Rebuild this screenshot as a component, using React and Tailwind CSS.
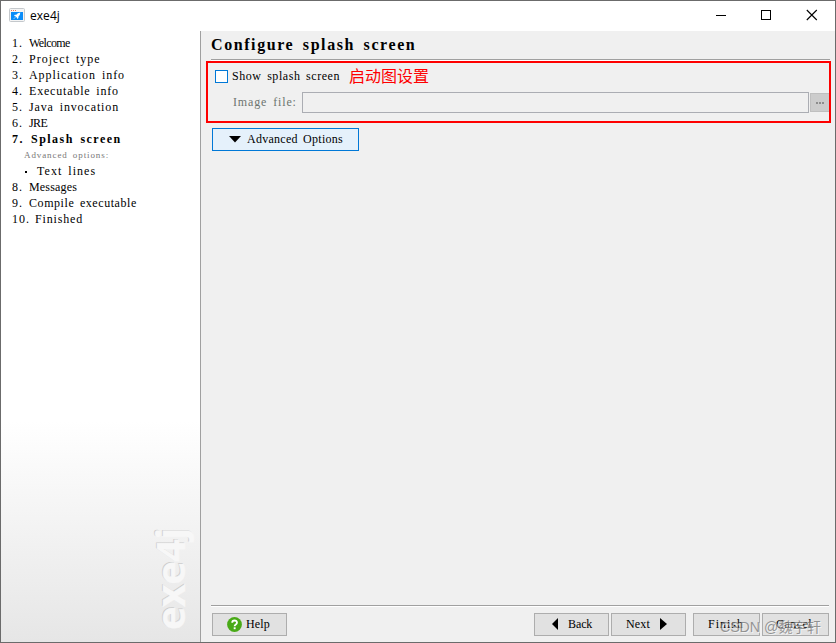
const SERIF = "font-['Liberation_Serif',serif]";

// Widely set 12px label text
function Label({ children, className = "" }) {
  return (
    <span className={`${SERIF} block shrink-0 whitespace-pre text-[12px] leading-4 [word-spacing:2px] ${className}`}>
      {children}
    </span>
  );
}

function Step({ n, tracking, children }) {
  return (
    <li className="flex h-4">
      <span className="w-[17px]"><Label className="tracking-[1px]">{n}.</Label></span>
      <Label className={tracking}>{children}</Label>
    </li>
  );
}

function Button({ className = "", children }) {
  return (
    <button className={`flex h-[23px] shrink-0 items-center border border-[#adadad] bg-[#e1e1e1] pb-px ${className}`}>
      {children}
    </button>
  );
}

function AppIcon() {
  return (
    <svg width="16" height="14" viewBox="0 0 16 14" className="-mt-[2px]">
      <rect x="0.5" y="0.5" width="15" height="13" rx="1" fill="#f4f4f4" stroke="#c4c8cc" />
      <path d="M2 2.5h1M4 2.5h1M6 2.5h1" stroke="#ed7655" strokeWidth="1" />
      <rect x="2" y="4" width="12" height="8" fill="#0b8cf8" />
      <path d="M11.3 4.6 8.8 5.2 7.3 6.8H5.8L5 8l1.3.2L8 9.8 8.2 11l1.2-1 .1-1.5L10.8 7Z" fill="#fff" />
      <path d="m5 10.6 1.2-1.2" stroke="#d8edff" />
    </svg>
  );
}

function TitleBar() {
  return (
    <header className="flex h-[30px] shrink-0 items-center bg-white pl-2">
      <AppIcon />
      <span className="ml-[5px] font-['Open_Sans',sans-serif] text-[12px] leading-4 tracking-[0.05px]">exe4j</span>
      <div className="ml-auto flex pr-[17px]">
        <svg width="103" height="12" viewBox="0 0 103 12" fill="none" stroke="#000" className="-mt-[2px]">
          <path d="M1 6.5h10" />
          <rect x="46.5" y="1.5" width="9" height="9" />
          <path d="m91.8 1 10 10m0-10-10 10" strokeWidth="1.1" />
        </svg>
      </div>
    </header>
  );
}

function Sidebar() {
  return (
    <aside className="flex w-[200px] shrink-0 flex-col justify-between border-r border-[#a0a0a0] bg-[linear-gradient(to_bottom,#fff_0,#fff_390px,#e6e6e6_100%)]">
      <ol className="pl-[11px] pt-1">
        <Step n="1" tracking="tracking-[-0.6px]">Welcome</Step>
        <Step n="2" tracking="tracking-[1px]">Project type</Step>
        <Step n="3" tracking="tracking-[0.94px]">Application info</Step>
        <Step n="4" tracking="tracking-[0.82px]">Executable info</Step>
        <Step n="5" tracking="tracking-[0.87px]">Java invocation</Step>
        <Step n="6" tracking="tracking-[-0.6px]">JRE</Step>
        <li className="flex h-4">
          <span className="w-[19px]"><Label className="font-bold tracking-[1.5px]">7.</Label></span>
          <Label className="font-bold tracking-[1.48px]">Splash screen</Label>
        </li>
        <li className={`${SERIF} h-4 pl-3 text-[9px] leading-4 tracking-[0.9px] text-[#777] [word-spacing:2px]`}>Advanced options:</li>
        <li className="flex h-4 items-center pl-[13px]">
          <span className="mr-[10px] mt-px size-[2px] bg-black" />
          <Label className="tracking-[1.03px]">Text lines</Label>
        </li>
        <Step n="8" tracking="tracking-[0.17px]">Messages</Step>
        <Step n="9" tracking="tracking-[0.57px]">Compile executable</Step>
        <Step n="10" tracking="pl-[6px] tracking-[0.83px]">Finished</Step>
      </ol>
      <svg className="ml-[149px]" width="46" height="116" viewBox="0 0 46 116">
        <g fontFamily="Open Sans, sans-serif" fontWeight="700" fontSize="40" letterSpacing="0.5">
          <text transform="translate(33.8 103.3) rotate(-90)" textLength="103" fill="#cdcdcd">exe4j</text>
          <text transform="translate(34.8 104.1) rotate(-90)" textLength="103" fill="#f7f7f7" stroke="#f7f7f7" strokeWidth="0.3">exe4j</text>
        </g>
      </svg>
    </aside>
  );
}

function SplashSettings() {
  return (
    <section className="ml-[5px] h-[62px] w-[625px] border-2 border-[#fe0000] pl-[7px]">
      <div className="flex h-[25px] items-center">
        <span className="mt-px size-[13px] shrink-0 border border-[#0078d7] bg-white" />
        <span className="ml-1 w-[117px] shrink-0"><Label className="tracking-[0.56px]">Show splash screen</Label></span>
        <span className="-mt-[2px] font-['Noto_Sans_CJK_SC',sans-serif] text-[16px] leading-5 text-[#fe0000]">启动图设置</span>
      </div>
      <div className="flex h-[27px] items-center">
        <span className="ml-[18px] w-[69px] shrink-0"><Label className="tracking-[0.86px] text-[#6d756f]">Image file:</Label></span>
        <span className="mt-[2px] h-[21px] w-[507px] shrink-0 border border-[#abadb3] bg-[#f0f0f0]" />
        <span className="ml-px mt-[2px] flex h-[19px] w-[19px] shrink-0 items-center justify-center gap-px border border-r-0 border-[#bfbfbf] bg-[#ccc]">
          <i className="h-[2px] w-[2px] bg-[#8d8d8d]" />
          <i className="h-[2px] w-[2px] bg-[#8d8d8d]" />
          <i className="h-[2px] w-[2px] bg-[#8d8d8d]" />
        </span>
      </div>
    </section>
  );
}

function Footer() {
  return (
    <footer className="mt-auto ml-[10px] mr-[6px]">
      <div className="h-[2px] border-b border-white bg-[#a0a0a0]" />
      <div className="relative flex pb-[6px] pl-px pt-[6px]">
        <Button className="w-[75px] pl-[14px]">
          <svg width="15" height="15" viewBox="0 0 15 15" className="shrink-0">
            <circle cx="7.5" cy="7.5" r="7.4" fill="#49aa17" />
            <path d="M5.2 5.8C5.2 2.7 10 2.8 10 5.7 10 7.6 7.6 7.5 7.6 9.2" fill="none" stroke="#fff" strokeWidth="1.8" />
            <rect x="6.7" y="10.3" width="1.9" height="1.9" fill="#fff" />
          </svg>
          <Label className="ml-1 tracking-[0.17px]">Help</Label>
        </Button>
        <Button className="ml-[247px] w-[75px] pl-[17px]">
          <svg width="6" height="12" viewBox="0 0 6 12" className="shrink-0"><path d="M6 0v12L0 6Z" /></svg>
          <Label className="ml-[10px] tracking-[-0.1px]">Back</Label>
        </Button>
        <Button className="ml-[2px] w-[75px] pl-[14px]">
          <span className="w-[34px] text-left"><Label className="tracking-[0.17px]">Next</Label></span>
          <svg width="7" height="12" viewBox="0 0 7 12" className="shrink-0"><path d="M0 0v12L7 6Z" /></svg>
        </Button>
        <Button className="ml-[7px] w-[67px] pl-[14px]"><Label className="tracking-[1px]">Finish</Label></Button>
        <Button className="ml-[2px] w-[67px] pl-[13px]"><Label className="tracking-[0.45px]">Cancel</Label></Button>
        <span className="absolute right-[8px] top-[10px] whitespace-nowrap font-['Liberation_Sans','Noto_Sans_CJK_SC',sans-serif] text-[14.2px] leading-5 text-[#777]/75 [text-shadow:1px_1px_0_rgba(255,255,255,0.6)]">
          CSDN @魏宇轩
        </span>
      </div>
    </footer>
  );
}

export default function App() {
  return (
    <div className="flex h-[643px] w-[836px] flex-col overflow-hidden border border-[#6b6b6b] bg-[#f0f0f0] text-black">
      <TitleBar />
      <div className="flex min-h-0 grow">
        <Sidebar />
        <main className="flex min-w-0 grow flex-col">
          <div className="ml-[10px] mr-[5px] h-[30px] border-b border-white">
            <h1 className={`${SERIF} h-[29px] whitespace-pre border-b border-[#a0a0a0] text-[16px] font-bold leading-7 tracking-[1.58px] [word-spacing:3px]`}>
              Configure splash screen
            </h1>
          </div>
          <SplashSettings />
          <button className="ml-[11px] mt-[5px] flex h-[23px] w-[147px] items-center border border-[#0078d7] bg-[#e5f1fb] pl-4">
            <svg width="12" height="7" viewBox="0 0 12 7" className="shrink-0"><path d="M0 0h12L6 6.5Z" /></svg>
            <Label className="-mt-px ml-[6px] tracking-[0.27px]">Advanced Options</Label>
          </button>
          <Footer />
        </main>
      </div>
    </div>
  );
}
